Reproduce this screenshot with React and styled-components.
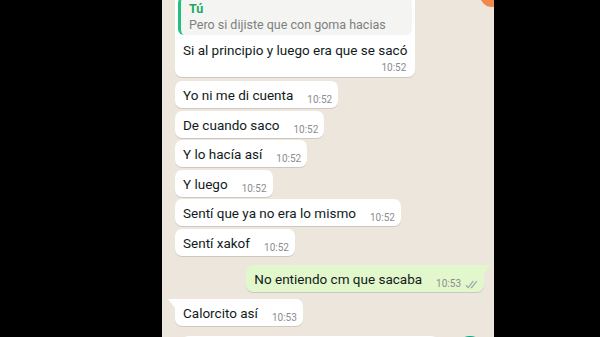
import React from 'react';
import styled, { createGlobalStyle, css } from 'styled-components';

const Global = createGlobalStyle`
  html, body { margin: 0; padding: 0; background: #000; }
  body { font-family: Roboto, "Noto Sans", Arial, sans-serif; -webkit-font-smoothing: antialiased; }
  * { box-sizing: border-box; }
`;

const Screen = styled.div`
  width: 600px;
  height: 337px;
  background: #000;
  display: flex;
  overflow: hidden;
`;

const Chat = styled.div`
  position: relative;
  margin-left: 162px;
  width: 332px;
  height: 337px;
  flex: none;
  background: #ede6dd;
  overflow: hidden;
  display: flex;
  flex-direction: column;
  padding: 0 13px;
`;

const Row = styled.div`
  display: flex;
  justify-content: ${p => (p.$out ? 'flex-end' : 'flex-start')};
  margin-top: ${p => p.$gap}px;
  margin-right: ${p => (p.$out ? -3 : 0)}px;
  flex: none;
`;

const bubbleBase = css`
  position: relative;
  background: ${p => (p.$out ? '#e2f7cb' : '#ffffff')};
  border-radius: 7px;
  box-shadow: 0 1px 0.6px rgba(0, 0, 0, 0.13);
  color: #111b21;
  ${p =>
    p.$tail &&
    !p.$out &&
    css`
      border-top-left-radius: 0;
      &::before {
        content: '';
        position: absolute;
        top: 0;
        left: -7px;
        width: 0;
        height: 0;
        border-right: 8px solid #ffffff;
        border-bottom: 10px solid transparent;
      }
    `}
  ${p =>
    p.$tail &&
    p.$out &&
    css`
      border-top-right-radius: 0;
      &::before {
        content: '';
        position: absolute;
        top: 0;
        right: -7px;
        width: 0;
        height: 0;
        border-left: 8px solid #e2f7cb;
        border-bottom: 10px solid transparent;
      }
    `}
`;

const Bubble = styled.div`
  ${bubbleBase};
  display: flex;
  align-items: flex-end;
  gap: 14px;
  padding: 5px 6px 4px 8px;
  font-size: 13.5px;
  line-height: 18px;
`;

const QuoteBubble = styled.div`
  ${bubbleBase};
  padding: 3px;
  display: flex;
  flex-direction: column;
`;

const Quote = styled.div`
  background: #f4f4f2;
  border-left: 3.5px solid #21c07f;
  border-radius: 6px;
  padding: 4px 8px 2px 8px;
`;

const QuoteAuthor = styled.div`
  color: #18a95f;
  font-size: 12.5px;
  font-weight: 700;
  line-height: 16px;
`;

const QuoteText = styled.div`
  color: #7d7f80;
  font-size: 12.5px;
  line-height: 16px;
`;

const QText = styled.div`
  padding: 6px 5px 0 5px;
  font-size: 13.5px;
  line-height: 18px;
`;

const QMeta = styled.div`
  display: flex;
  justify-content: flex-end;
  padding: 3px 6px 0;
`;

const Text = styled.span`
  white-space: nowrap;
`;

const Meta = styled.span`
  display: flex;
  align-items: center;
  gap: 4px;
  margin-bottom: -2px;
  white-space: nowrap;
`;

const Time = styled.span`
  font-size: 10px;
  line-height: 12px;
  color: #8a8d8f;
`;

const Footer = styled.div`
  display: flex;
  gap: 10px;
  margin-top: 10px;
  margin-right: -4px;
  flex: none;
`;

const Input = styled.div`
  flex: 1;
  height: 30px;
  border-radius: 15px;
  background: #ffffff;
`;

const Mic = styled.div`
  width: 30px;
  height: 30px;
  border-radius: 50%;
  background: #00a884;
  flex: none;
`;

const Orb = styled.div`
  position: absolute;
  top: -17px;
  right: -10px;
  width: 24px;
  height: 24px;
  border-radius: 50%;
  background: #f2894c;
`;

const Checks = () => (
  <svg width="13" height="9" viewBox="0 0 13 9" fill="none">
    <path d="M0.8 5.2 L3.2 7.6 L8.2 1.2" stroke="#9aa3a8" strokeWidth="1.1" />
    <path d="M6 7 L6.6 7.6 L11.8 1.2" stroke="#9aa3a8" strokeWidth="1.1" />
  </svg>
);

const incoming = [
  { t: 'Yo ni me di cuenta', gap: 4 },
  { t: 'De cuando saco', gap: 2.5 },
  { t: 'Y lo hacía así', gap: 2.5 },
  { t: 'Y luego', gap: 2.5 },
  { t: 'Sentí que ya no era lo mismo', gap: 2.5 },
  { t: 'Sentí xakof', gap: 2.5 },
];

export default function App() {
  return (
    <>
      <Global />
      <Screen>
        <Chat>
          <Orb />
          <Row $gap={-6}>
            <QuoteBubble>
              <Quote>
                <QuoteAuthor>Tú</QuoteAuthor>
                <QuoteText>Pero si dijiste que con goma hacias</QuoteText>
              </Quote>
              <QText>Si al principio y luego era que se sacó</QText>
              <QMeta>
                <Time>10:52</Time>
              </QMeta>
            </QuoteBubble>
          </Row>
          {incoming.map(m => (
            <Row key={m.t} $gap={m.gap}>
              <Bubble>
                <Text>{m.t}</Text>
                <Meta>
                  <Time>10:52</Time>
                </Meta>
              </Bubble>
            </Row>
          ))}
          <Row $out $gap={9.5}>
            <Bubble $out $tail>
              <Text>No entiendo cm que sacaba</Text>
              <Meta>
                <Time>10:53</Time>
                <Checks />
              </Meta>
            </Bubble>
          </Row>
          <Row $gap={7}>
            <Bubble $tail>
              <Text>Calorcito así</Text>
              <Meta>
                <Time>10:53</Time>
              </Meta>
            </Bubble>
          </Row>
          <Footer>
            <Input />
            <Mic />
          </Footer>
        </Chat>
      </Screen>
    </>
  );
}
